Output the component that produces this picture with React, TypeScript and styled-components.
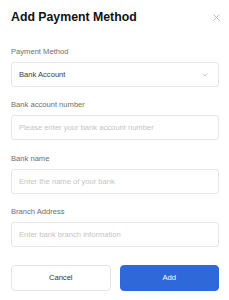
import styled, { createGlobalStyle } from "styled-components"

const GlobalStyle = createGlobalStyle`
	html, body {
		margin: 0;
		padding: 0;
		background: #ffffff;
	}
	* {
		box-sizing: border-box;
	}
`

const fields = [
	{ label: "Bank account number", placeholder: "Please enter your bank account number" },
	{ label: "Bank name", placeholder: "Enter the name of your bank" },
	{ label: "Branch Address", placeholder: "Enter bank branch information" },
]

export default function App() {
	return (
		<>
			<GlobalStyle />
			<Modal>
				<Header>
					<Title>Add Payment Method</Title>
					<CloseButton aria-label="Close">
						<svg width="7" height="7" viewBox="0 0 7 7">
							<path d="M0.5 0.5 L6.5 6.5 M6.5 0.5 L0.5 6.5" stroke="#b4b4b4" strokeWidth="0.9" fill="none" />
						</svg>
					</CloseButton>
				</Header>

				<Form>
					<Group>
						<Label>Payment Method</Label>
						<Select>
							<span>Bank Account</span>
							<svg width="6" height="4" viewBox="0 0 6 4">
								<path d="M0.5 0.7 L3 3.2 L5.5 0.7" stroke="#b0b0b0" strokeWidth="0.8" fill="none" />
							</svg>
						</Select>
					</Group>

					{fields.map((f) => (
						<Group key={f.label}>
							<Label>{f.label}</Label>
							<Input placeholder={f.placeholder} />
						</Group>
					))}
				</Form>

				<Actions>
					<Button>Cancel</Button>
					<Button primary>Add</Button>
				</Actions>
			</Modal>
		</>
	)
}

const Modal = styled.div`
	width: 229px;
	height: 300px;
	padding: 9px 10px 0 11px;
	font-family: "Liberation Sans", Arial, sans-serif;
`

const Header = styled.div`
	display: flex;
	justify-content: space-between;
	align-items: center;
	height: 16px;
	margin-bottom: 22px;
`

const Title = styled.h2`
	margin: 0;
	font-size: 12.3px;
	line-height: 16px;
	font-weight: 700;
	color: #111111;
`

const CloseButton = styled.button`
	display: flex;
	align-items: center;
	justify-content: center;
	width: 10px;
	height: 10px;
	padding: 0;
	margin-right: -2px;
	border: none;
	background: none;
`

const Form = styled.div`
	display: flex;
	flex-direction: column;
	gap: 13.3px;
`

const Group = styled.div`
	display: flex;
	flex-direction: column;
	gap: 6px;
`

const Label = styled.label`
	font-size: 7.6px;
	line-height: 9px;
	color: #6e6e6e;
`

const Select = styled.div`
	display: flex;
	justify-content: space-between;
	align-items: center;
	height: 25px;
	padding: 0 10px 0 7px;
	border: 1px solid #e6e6e6;
	border-radius: 3px;
	font-size: 7.6px;
	color: #3a3a3a;
`

const Input = styled.input`
	height: 25px;
	padding: 0 7px;
	border: 1px solid #e6e6e6;
	border-radius: 3px;
	font-family: inherit;
	font-size: 7.6px;
	color: #333333;
	outline: none;

	&::placeholder {
		color: #c4c4c4;
	}
`

const Actions = styled.div`
	display: grid;
	grid-template-columns: 1fr 1fr;
	gap: 9px;
	margin-top: 18px;
`

const Button = styled.button<{ primary?: boolean }>`
	height: 26px;
	border-radius: 4px;
	border: 1px solid ${(p) => (p.primary ? "#2f68d8" : "#e4e4e4")};
	background: ${(p) => (p.primary ? "#2f68d8" : "#ffffff")};
	color: ${(p) => (p.primary ? "#ffffff" : "#333333")};
	font-family: inherit;
	font-size: 7.6px;
	padding: 0;
`
